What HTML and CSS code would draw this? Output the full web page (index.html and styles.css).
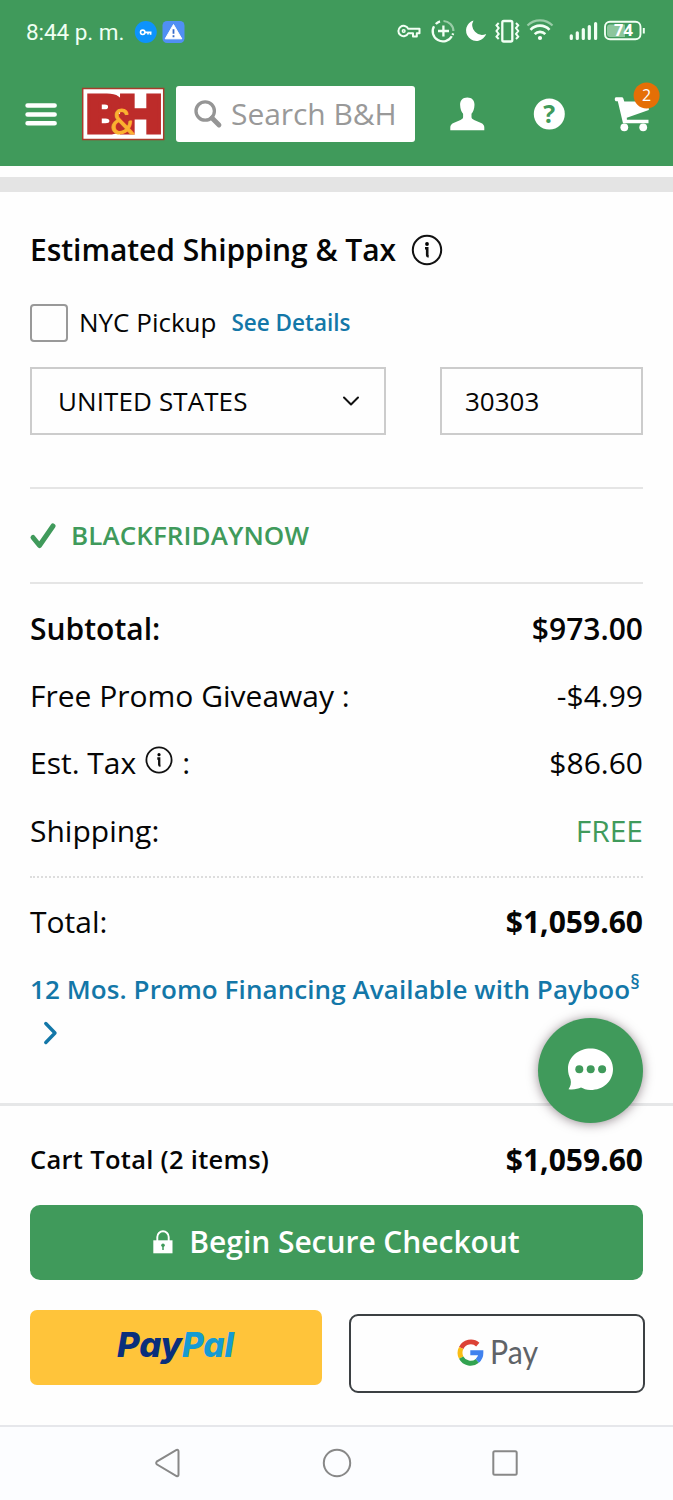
FILE: index.html
```html
<!DOCTYPE html>
<html lang="en">
<head>
<meta charset="utf-8">
<title>Cart</title>
<link rel="stylesheet" href="styles.css">
</head>
<body>
<div class="screen">
  <header class="top">
    <div class="status">
      <span class="time">8:44 p. m.</span>
      <svg class="notif" width="50" height="24" viewBox="135 20 50 24">
        <circle cx="145.8" cy="32" r="11" fill="#0d93fb"/>
        <circle cx="142.700" cy="32.300" r="2.200" fill="none" stroke="#fff" stroke-width="1.600"/>
        <path d="M145 32.300h6.500M148 32.500v2M150.600 32.500v2.200" stroke="#fff" stroke-width="1.700" fill="none"/>
        <rect x="162.500" y="21" width="22" height="22" rx="4.500" fill="#508ff4"/>
        <path d="M173.500 24.500l8.300 14.300h-16.600z" fill="#fff" stroke="#fff" stroke-width="1" stroke-linejoin="round"/>
        <path d="M173.500 29.300v4.500M173.500 35.300v2" stroke="#3569c9" stroke-width="1.800"/>
      </svg>
      <svg class="sys" width="250" height="28" viewBox="396 17 250 28" fill="none" stroke="#f2fff4">
        <path d="M408.300 28.800a5.200 5.200 0 1 0 0 4.400h4.700v3.300h3.800v-3.300h2.700v-4.400z" stroke-width="2" stroke-linejoin="round"/>
        <circle cx="403.700" cy="31" r="1.300" stroke-width="1.500"/>
        <path d="M440 21.400a10.200 10.200 0 0 0-4.200 2.600M434 26.200a10.200 10.200 0 0 0 17.800 10M452.500 35a10.200 10.200 0 0 0 .6-1.600" stroke-width="2.300"/>
        <path d="M443.500 21a10.200 10.200 0 0 1 9.900 10" stroke-width="2.200" opacity=".5"/>
        <path d="M443.400 25.500v11M438 31h11" stroke-width="2.300"/>
        <path d="M473.500 20.500a10.400 10.400 0 1 0 12.700 13.500a9.800 9.800 0 0 1-12.700-13.500z" fill="#fff" stroke="none"/>
        <rect x="502.300" y="21" width="10" height="20.500" rx="1.500" stroke-width="2.300"/>
        <path d="M498.700 23l-2.200 2.300 2.200 2.800-2.200 2.900 2.200 2.900-2.200 2.800 2.200 2.300M516 23l2.200 2.300-2.200 2.800 2.200 2.900-2.200 2.900 2.200 2.800-2.200 2.300" stroke-width="2"/>
        <path d="M527.500 25.500a18 18 0 0 1 25 0" stroke-width="2.200" opacity=".5"/>
        <path d="M530.500 29.800a13 13 0 0 1 19 0M534.700 34.200a7.300 7.300 0 0 1 10.600 0" stroke-width="2.600"/>
        <circle cx="540" cy="38" r="2.100" fill="#fff" stroke="none"/>
        <path d="M571.300 35.800v2.700M577.300 32.800v5.700M583.300 29.500v9M589.300 26.500v12M595.600 23.500v15" stroke-width="3.200" stroke-linecap="round"/>
        <path d="M612 24.500v12.500h-2.500a2.700 2.700 0 0 1-2.500-2.500v-7.500a2.700 2.700 0 0 1 2.500-2.500zM612 24.500h13v12.500h-13z" fill="#8cc69c" stroke="none"/>
        <rect x="605" y="21.800" width="35.500" height="17.500" rx="5" stroke-width="1.900"/>
        <path d="M643.800 28v5.500" stroke-width="2"/>
        <text x="614" y="36.300" class="batt">74</text>
      </svg>
    </div>
    <div class="bar">
      <svg class="menu" width="32" height="24" viewBox="0 0 32 24"><path d="M2.600 3.500h27M2.600 12.500h27M2.600 21.300h27" stroke="#fff" stroke-width="4.600" stroke-linecap="round"/></svg>
      <svg class="logo" width="84" height="54" viewBox="81 87 84 54">
        <rect x="82.700" y="88.500" width="81" height="51" fill="#fff" stroke="#a83c2b" stroke-width="1.500"/>
        <text x="86.300" y="133.300" class="lg" textLength="38" lengthAdjust="spacingAndGlyphs">B</text>
        <text x="119" y="133.300" class="lg" textLength="43" lengthAdjust="spacingAndGlyphs">H</text>
        <text x="110.500" y="134.300" class="amp" textLength="24" lengthAdjust="spacingAndGlyphs">&amp;</text>
      </svg>
      <div class="search">
        <svg width="30" height="30" viewBox="0 0 30 30" fill="none" stroke="#959595"><circle cx="12.200" cy="12" r="9.200" stroke-width="3.300"/><path d="M19 19l7 7" stroke-width="4.800" stroke-linecap="round"/></svg>
        <span class="ph">Search B&amp;H</span>
      </div>
      <svg class="acts" width="240" height="64" viewBox="430 77 240 64" fill="#fff">
        <path d="M467.300 97.500c-4.500 0-7.300 2.800-7.200 7.300c.1 4.500 1.400 7 3 9v3.200c0 1.500-1 2.200-2.600 2.900l-7 3c-2.200 1-3.200 2.500-3.200 4.500v2.800h34v-2.800c0-2-1-3.500-3.200-4.500l-7-3c-1.600-.7-2.600-1.400-2.600-2.900v-3.200c1.600-2 2.900-4.500 3-9c.1-4.500-2.700-7.300-7.200-7.300z"/>
        <circle cx="549.300" cy="114" r="15.500"/>
        <text x="549.300" y="122.800" text-anchor="middle" class="q">?</text>
        <path d="M616 97.300h5.500c1.200 0 1.800.6 2 1.600l.8 2.600h24.500v8.500l-22 7.800l.1 1.900h21.600v3.600h-25.500l-5.200-22.100h-1.800c-1.600 0-1.600-3.900 0-3.900z"/>
        <circle cx="624.300" cy="127.300" r="3.900"/><circle cx="643.200" cy="127.300" r="3.900"/>
        <circle cx="646.600" cy="95.500" r="13" fill="#e56f06"/>
        <text x="646.600" y="101" text-anchor="middle" class="badge">2</text>
      </svg>
    </div>
  </header>
  <div class="band"></div>
  <main class="body">
    <h1 class="title"><span class="t-title">Estimated Shipping &amp; Tax</span>
      <svg width="32" height="32" viewBox="0 0 32 32"><circle cx="16" cy="16" r="14.200" fill="none" stroke="#111" stroke-width="2"/><circle cx="16" cy="10" r="1.900"/><path d="M14 14.300h2.200v7q0 1 1.500 1.200" fill="none" stroke="#111" stroke-width="2.600"/></svg>
    </h1>
    <div class="pickup"><span class="check"></span><span class="t-nyc">NYC Pickup</span><a class="t-see">See Details</a></div>
    <div class="fields">
      <div class="select"><span class="t-us">UNITED STATES</span><svg width="18" height="12" viewBox="0 0 18 12"><path d="M2 2.500l7 7 7-7" fill="none" stroke="#111" stroke-width="2" stroke-linecap="round" stroke-linejoin="round"/></svg></div>
      <div class="zip"><span class="t-zip">30303</span></div>
    </div>
    <div class="promo"><svg width="27" height="28" viewBox="0 0 27 28"><path d="M3 15.500L9.500 23.500L23 4" fill="none" stroke="#409a5b" stroke-width="5" stroke-linecap="round" stroke-linejoin="round"/></svg><span class="t-promo">BLACKFRIDAYNOW</span></div>
    <div class="lines">
      <div class="line semi"><span class="t-sub">Subtotal:</span><span class="t-973">$973.00</span></div>
      <div class="line"><span class="t-free">Free Promo Giveaway :</span><span class="t-499">-$4.99</span></div>
      <div class="line"><span class="taxl"><span class="t-tax">Est. Tax</span><svg width="28" height="28" viewBox="0 0 28 28"><circle cx="14" cy="14" r="12.600" fill="none" stroke="#111" stroke-width="1.800"/><circle cx="14" cy="8.700" r="1.600"/><path d="M12.300 12.500h1.900v6.200q0 1 1.300 1.200" fill="none" stroke="#111" stroke-width="2.300"/></svg><span>:</span></span><span class="t-86">$86.60</span></div>
      <div class="line"><span class="t-ship">Shipping:</span><span class="free">FREE</span></div>
    </div>
    <div class="line total"><span class="t-total">Total:</span><b class="t-1059">$1,059.60</b></div>
    <div class="fin"><span class="t-fin">12 Mos. Promo Financing Available with Payboo</span><span class="sec">§</span></div>
    <svg class="chev" width="16" height="24" viewBox="0 0 16 24"><path d="M2.800 2.500L12 12l-9.200 9.500" fill="none" stroke="#1377a8" stroke-width="3.400" stroke-linecap="round" stroke-linejoin="round"/></svg>
  </main>
  <section class="cart">
    <div class="line ct"><span class="t-cart">Cart Total (2 items)</span><b class="t-1059">$1,059.60</b></div>
    <div class="checkout">
      <svg width="20" height="24" viewBox="0 0 20 24"><path d="M4.300 11V7a5.700 5.700 0 0 1 11.400 0v4" fill="none" stroke="#fff" stroke-width="1.900"/><path d="M.3 10.300h19.200v13H.3z" fill="#fff"/><circle cx="10" cy="15.300" r="1.800" fill="#409a5b"/><path d="M10 15v5" stroke="#409a5b" stroke-width="1.500"/></svg>
      <span class="t-begin">Begin Secure Checkout</span>
    </div>
    <div class="pays">
      <div class="paypal"><svg width="124" height="50" viewBox="0 0 124 50"><text x="3" y="34" class="pp" fill="#0a2f7c" textLength="65" lengthAdjust="spacingAndGlyphs">Pay</text><text x="68" y="34" class="pp" fill="#159bd2" textLength="52" lengthAdjust="spacingAndGlyphs">Pal</text></svg></div>
      <div class="gpay"><svg width="84" height="40" viewBox="0 0 84 40">
        <g fill="none" stroke-width="4.900"><path d="M21.800 10.600A10.600 10.600 0 0 0 5.200 14" stroke="#dc4236"/><path d="M5.200 14A10.600 10.600 0 0 0 5.200 23.600" stroke="#f9bd15"/><path d="M5.200 23.600A10.600 10.600 0 0 0 21.300 26.800" stroke="#32a350"/><path d="M21.300 26.800A10.600 10.600 0 0 0 24.900 18.700H14.300" stroke="#4182ee"/></g>
        <text x="34" y="30" class="gp" textLength="48" lengthAdjust="spacingAndGlyphs">Pay</text></svg></div>
    </div>
    <div class="chat"><svg width="48" height="46" viewBox="0 0 48 46"><path d="M24.500 1.500C36 1.500 47 9.500 47 22S37 43 24.500 43c-4.500 0-7-1.500-9.500-2.500c-3 1-6.500 2.700-12.500 1.800c2-3 3-6 2-10C3 29 2 26 2 22C2 9.500 13 1.500 24.500 1.500z" fill="#fff"/><g fill="#409a5b"><circle cx="13.300" cy="22.300" r="4"/><circle cx="24.700" cy="22.300" r="4"/><circle cx="36.100" cy="22.300" r="4"/></g></svg></div>
  </section>
  <nav class="nav">
    <svg width="28" height="30" viewBox="0 0 28 30"><path d="M2.700 13.600Q1.500 15 2.700 16.300L22.500 28Q24.500 28.800 24.500 26.500V3.500Q24.500 1.200 22.500 2z"/></svg>
    <svg width="30" height="30" viewBox="0 0 30 30"><circle cx="15" cy="15" r="13.200"/></svg>
    <svg width="28" height="28" viewBox="0 0 28 28"><rect x="2.300" y="2.300" width="23.400" height="23.400" rx="1.500"/></svg>
  </nav>
</div>
</body>
</html>
```
FILE: styles.css
```css
* { box-sizing: border-box; }
body { margin: 0; background: #fefefe; color: #050505; font-family: "Open Sans", sans-serif; }
svg { display: block; flex: none; overflow: visible; }
span, b, a { white-space: nowrap; }
.screen { width: 673px; height: 1500px; overflow: hidden; display: flex; flex-direction: column; }
.top { height: 166px; background: #409a5b; flex: none; }
.status { height: 62px; display: flex; align-items: center; padding: 0 27px 0 26px; }
.time { font-family: Roboto, sans-serif; font-size: 22.5px; color: #effff2; letter-spacing: -.05px; width: 109px; padding-top: 2px; }
.notif { margin-top: 2px; }
.sys { margin-left: 211px; }
.batt { font: 700 16.500px "Open Sans", sans-serif; fill: #fff; stroke: none; }
.bar { height: 104px; display: flex; align-items: center; padding-left: 25px; }
.logo { margin-left: 24px; }
.lg { font: 900 52px Inter, sans-serif; fill: #bd2c2a; stroke: #bd2c2a; stroke-width: 3px; }
.amp { font: 400 35px Lato, sans-serif; fill: #fbb130; stroke: #fbb130; stroke-width: 1px; }
.search { width: 239px; height: 56px; background: #fff; border-radius: 3px; margin-left: 11px; padding-left: 17px; display: flex; align-items: center; }
.ph { font-size: 30px; color: #999; margin: -2px 0 0 8px; letter-spacing: -.05px; }
.acts { margin-left: 15px; margin-top: -10px; }
.q { font: 700 25px "Open Sans", sans-serif; fill: #409a5b; }
.badge { font: 400 16px "Open Sans", sans-serif; fill: #fff; }
.band { height: 15px; margin-top: 11px; background: #e4e4e4; flex: none; }
.body { height: 911px; padding: 30px 30px 0; flex: none; }
.title { margin: 0; height: 54px; font-size: 30px; letter-spacing: -.05px; font-weight: 600; display: flex; align-items: center; gap: 15px; }
.title svg { margin-top: 2px; }
.pickup { height: 37px; margin-top: 28px; display: flex; align-items: center; font-size: 26px; }
.check { width: 38px; height: 38px; border: 2px solid #999; border-radius: 4px; margin-right: 11px; }
.t-nyc { margin-top: -2px; }
.t-see { font-size: 22.500px; font-weight: 600; color: #1377a8; margin-left: 15px; }
.fields { display: flex; justify-content: space-between; margin-top: 26px; font-size: 26px; }
.select, .zip { height: 68px; border: 2px solid #ccc; display: flex; align-items: center; }
.select { width: 356px; padding: 0 24px 0 26px; justify-content: space-between; }
.t-us { letter-spacing: .1px; }
.zip { width: 203px; padding-left: 23px; }
.promo { height: 97px; margin-top: 52px; border-top: 2px solid #e5e5e5; border-bottom: 2px solid #e5e5e5; display: flex; align-items: center; gap: 14px; font-size: 26px; font-weight: 600; color: #409a5b; }
.t-promo { font-size: 26px; letter-spacing: .08px; margin-top: -1px; }
.lines { padding-top: 11px; height: 294px; border-bottom: 2px dotted #ddd; }
.line { height: 67.200px; display: flex; align-items: center; justify-content: space-between; font-size: 30px; }
.semi { font-weight: 600; }
.taxl { display: flex; align-items: center; gap: 9px; }
.taxl svg { margin-top: -5px; }
.free { color: #409a5b; }
.total { height: 86px; }
.fin { height: 50px; display: flex; align-items: center; font-size: 26px; letter-spacing: .09px; font-weight: 600; color: #1377a8; }
.sec { font-size: 19px; margin-top: -15px; }
.chev { margin: 7px 0 0 13px; }
.cart { height: 322px; border-top: 3px solid #e6e7e8; padding: 0 28px 0 30px; position: relative; flex: none; }
.ct { height: 99px; padding-top: 8px; margin-right: 2px; }
.t-cart { font-size: 25.500px; font-weight: 600; letter-spacing: .3px; margin-top: -1px; }
.checkout { height: 75px; margin-right: 2px; border-radius: 10px; background: #409a5b; color: #fff; font-size: 30px; font-weight: 600; display: flex; align-items: center; justify-content: center; gap: 16px; padding-bottom: 2px; }
.t-begin { letter-spacing: -.05px; }
.pays { display: flex; justify-content: space-between; margin-top: 30px; }
.paypal { width: 292px; height: 75px; border-radius: 7px; background: #ffc43a; display: flex; align-items: center; justify-content: center; }
.gpay { width: 296px; height: 79px; margin-top: 4px; border: 2px solid #3c4043; border-radius: 9px; display: flex; align-items: center; justify-content: center; }
.gpay svg { margin-left: 1px; }
.pp { font: italic 800 34px Inter, sans-serif; }
.gp { font: 400 32px Lato, sans-serif; fill: #5f6368; }
.chat { position: absolute; top: -88px; right: 30px; width: 105px; height: 105px; border-radius: 50%; background: #409a5b; box-shadow: 0 1px 11px rgba(50,30,40,.5); display: flex; align-items: center; justify-content: center; padding: 0 2px 2px 0; }
.nav { flex: 1; border-top: 2px solid #e6e7eb; background: #fcfdff; display: flex; justify-content: space-between; align-items: center; padding: 0 154px 2px; }
.nav svg { fill: none; stroke: #888; stroke-width: 2; }
```
